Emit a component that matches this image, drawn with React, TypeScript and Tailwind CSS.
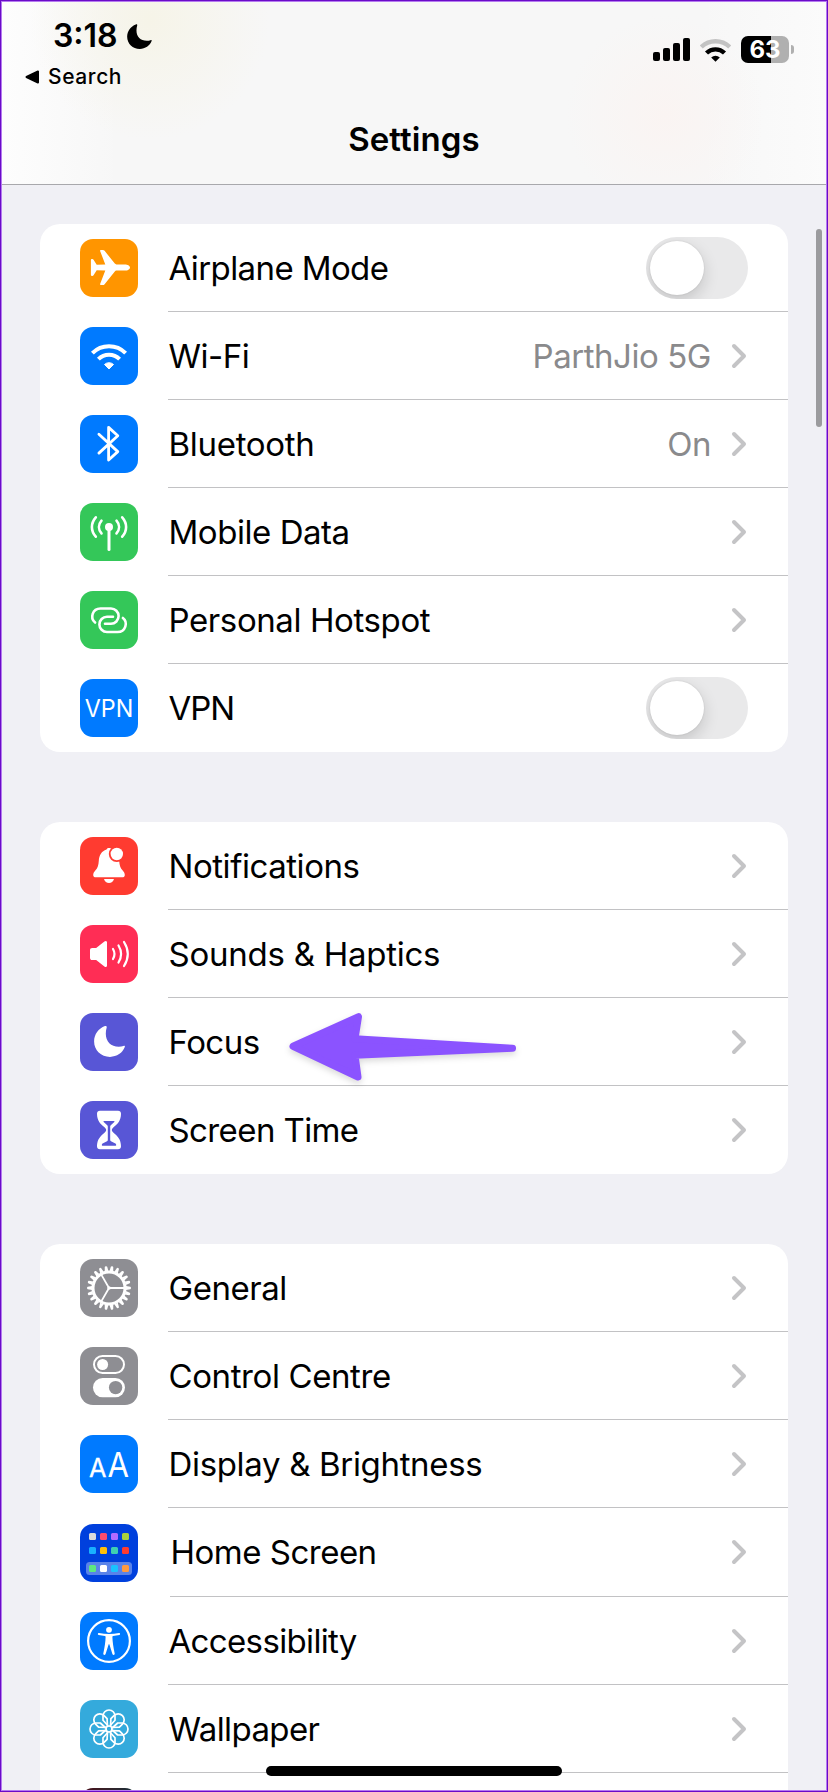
import type { ReactNode } from 'react';

type SettingsItem = {
    label: string;
    icon: ReactNode;
    iconClass: string;
    labelClass?: string;
    rowClass?: string;
    bodyClass?: string;
    value?: string;
    toggle?: boolean;
};

const GEAR_TEETH = Array.from({ length: 22 }, (_, i) => (i * 360) / 22);
const PETALS = [0, 45, 90, 135, 180, 225, 270, 315];

const HOME_APPS = [
    { y: 9, colors: ['#d9dadb', '#fc4c6c', '#b36bff', '#a9d23c'] },
    { y: 23, colors: ['#19b0ff', '#ffbf0a', '#3fcfb0', '#ff3b30'] },
    { y: 41, colors: ['#5ee87f', '#ffffff', '#19c2ff', '#ff9a40'] },
];

function Svg({ children }: { children: ReactNode }) {
    return (
        <svg viewBox="0 0 58 58" className="block size-[58px]" fill="none">
            {children}
        </svg>
    );
}

function AirplaneIcon() {
    return (
        <Svg>
            <path
                fill="#fff"
                d="M50 28.5c0-2-2.6-3.1-5-3.1h-8.6c-.7 0-1.1-.3-1.6-.8L24.6 11.8c-.5-.6-1-.9-1.8-.9h-2c-.6 0-.9.5-.7 1.1l5.2 13.4-8.6.4-3-4.9c-.4-.6-.8-.8-1.5-.8h-.5c-.5 0-.8.3-.8.8v15.2c0 .5.3.8.8.8h.5c.7 0 1.1-.2 1.5-.8l3-4.9 8.6.4L20.1 45c-.2.6.1 1.1.7 1.1h2c.8 0 1.3-.3 1.8-.9l10.200-12.800c.5-.5.9-.8 1.600-.8H45c2.400 0 5-1.100 5-3.100Z"
            />
        </Svg>
    );
}

function WifiIcon() {
    return (
        <Svg>
            <g stroke="#fff" strokeWidth="4">
                <path d="M12.4 26.1a23.5 23.5 0 0 1 33.2 0" />
                <path d="M18.4 32.2a15 15 0 0 1 21.2 0" />
            </g>
            <path fill="#fff" stroke="#fff" strokeLinejoin="round" d="M24.5 37.5a6.6 6.6 0 0 1 9 0L29 42Z" />
        </Svg>
    );
}

function BluetoothIcon() {
    return (
        <Svg>
            <path
                stroke="#fff"
                strokeWidth="2.8"
                strokeLinecap="round"
                strokeLinejoin="round"
                d="M18.9 19.3 37.8 36.6 28.6 45V12.4L37.8 20.8 18.9 38.1"
            />
        </Svg>
    );
}

function AntennaIcon() {
    return (
        <Svg>
            <circle cx="29" cy="24" r="4" fill="#fff" />
            <g stroke="#fff" strokeLinecap="round" strokeWidth="2.6">
                <path strokeWidth="3" d="M29 25v21.5" />
                <path d="M21.5 17.7c-3.4 3.9-3.4 8.8 0 12.7M36.5 17.7c3.4 3.9 3.4 8.8 0 12.7" />
                <path d="M15.8 14.3c-5.2 5.9-5.2 13.5 0 19.4M42.2 14.3c5.2 5.9 5.2 13.5 0 19.4" />
            </g>
        </Svg>
    );
}

function HotspotIcon() {
    return (
        <Svg>
            <g stroke="#fff" strokeWidth="2.6" strokeLinecap="round">
                <path d="M15.1 31.5C9.7 27.3 12.3 17.5 20.5 17.5H31a7.6 7.6 0 0 1 0 15.2H25" />
                <path d="M42.9 27C48.3 31.2 45.7 41 37.5 41H27a7.6 7.6 0 0 1 0-15.2h6" />
            </g>
        </Svg>
    );
}

function VpnIcon() {
    return (
        <Svg>
            <text x="4.8" y="38" fill="#fff" fontSize="24" textLength="48.5" lengthAdjust="spacingAndGlyphs">
                VPN
            </text>
        </Svg>
    );
}

function BellIcon() {
    return (
        <Svg>
            <path
                fill="#fff"
                d="M29 11c-1 0-1.9.4-2.5 1.4-5 1.6-7.3 5.7-7.7 11.3-.3 4.2-1 7.1-3.3 9.6-1.4 1.5-2.300 3-2.300 4.600 0 1.500 1 2.400 2.700 2.400h26.200c1.700 0 2.700-.9 2.700-2.400 0-1.600-.9-3.100-2.300-4.600-2.300-2.500-3-5.400-3.300-9.600V11Z"
            />
            <path fill="#fff" d="M24 42h10c-.8 2.6-2.6 4-5 4s-4.2-1.4-5-4Z" />
            <circle cx="36.8" cy="17" r="8" fill="#ff3b30" />
            <path fill="#ff3b30" d="M32 9.500H46v6H31Z" />
            <circle cx="36.8" cy="17" r="6.2" fill="#fff" />
        </Svg>
    );
}

function SpeakerIcon() {
    return (
        <Svg>
            <path
                fill="#fff"
                d="M10 25.2c0-1.5.8-2.3 2.3-2.3h3.2c.5 0 .9-.1 1.3-.5l7.6-5.9c1.3-1 2.6-.5 2.6 1v23c0 1.5-1.3 2-2.6 1l-7.6-5.900c-.4-.4-.8-.5-1.300-.5h-3.200c-1.500 0-2.300-.8-2.300-2.300Z"
            />
            <g stroke="#fff" strokeWidth="2.2" strokeLinecap="round">
                <path d="M33 24c1.9 3.2 1.9 6.8 0 10" />
                <path d="M38.500 20.500c3.300 5.400 3.300 11.600 0 17" />
                <path d="M44 17c4.800 7.600 4.800 16.400 0 24" />
            </g>
        </Svg>
    );
}

function MoonShape() {
    return (
        <path d="M25 13.1C18.5 15.5 14.1 21.4 14.1 28.6c0 8.7 7 15.3 15.9 15.3 6.8 0 12.6-4 14.8-9.8.4-1-.3-1.6-1.3-1.2-1.4.5-3 .8-4.7.8-7.9 0-13-5-13-12.9 0-2.2.3-4.4.9-6.3.3-1.1-.6-1.8-1.7-1.4Z" />
    );
}

function MoonIcon() {
    return (
        <Svg>
            <g fill="#fff">
                <MoonShape />
            </g>
        </Svg>
    );
}

function HourglassIcon() {
    return (
        <Svg>
            <path
                fill="#fff"
                d="M17 12.7c0-1.9 1.1-3 3-3h18c1.9 0 3 1.1 3 3 0 7-3.5 10.2-7.5 13.6-2.3 2-2.3 3.4 0 5.4C37.5 35.1 41 38.3 41 45.3c0 1.9-1.1 3-3 3H20c-1.9 0-3-1.1-3-3 0-7 3.5-10.2 7.5-13.6 2.3-2 2.3-3.4 0-5.4C20.5 22.900 17 19.700 17 12.700Z"
            />
            <path
                fill="#5856d6"
                d="M24 20h10c.5 0 .6.5.3.9L31 24c-.5.5-.8 1-.8 1.600v13.400c0 .6.3 1 .8 1.300l4.400 2.300c.5.300.8.700.8 1.500 0 .4-.2.600-.6.600H22.400c-.4 0-.6-.2-.6-.6 0-.8.3-1.200.8-1.500l4.400-2.300c.5-.3.8-.7.8-1.300V25.600c0-.6-.3-1.100-.8-1.600l-3.300-3.100c-.3-.4-.2-.9.3-.9Z"
            />
        </Svg>
    );
}

function GearIcon() {
    return (
        <Svg>
            {GEAR_TEETH.map((angle) => (
                <path
                    key={angle}
                    fill="#fff"
                    d="M46 27.1 50.300 27.800q.7.200.7 1.200t-.7 1.200L46 30.900Z"
                    transform={`rotate(${angle} 29 29)`}
                />
            ))}
            <circle cx="29" cy="29" r="16" stroke="#fff" strokeWidth="3" />
            <path stroke="#fff" strokeWidth="1.8" d="M29 29h16M29 29l-8-13.900M29 29l-8 13.900" />
            <circle cx="29" cy="29" r="1.8" fill="#fff" />
        </Svg>
    );
}

function ControlIcon() {
    return (
        <Svg>
            <rect x="14" y="9" width="30" height="17" rx="8.5" stroke="#fff" strokeWidth="2" />
            <circle cx="22.6" cy="17.5" r="5.5" fill="#fff" />
            <rect x="13" y="31" width="32" height="19.2" rx="9.6" fill="#fff" />
            <circle cx="35.6" cy="40.6" r="6.7" fill="#8e8e93" />
        </Svg>
    );
}

function TextSizeIcon() {
    return (
        <Svg>
            <g fill="#fff">
                <text x="9" y="41.5" fontSize="26" textLength="17.5" lengthAdjust="spacingAndGlyphs" stroke="#fff" strokeWidth=".3">
                    A
                </text>
                <text x="27.5" y="41.5" fontSize="34" textLength="21.5" lengthAdjust="spacingAndGlyphs">
                    A
                </text>
            </g>
        </Svg>
    );
}

function HomeScreenIcon() {
    return (
        <Svg>
            <rect x="6" y="38" width="46" height="13" rx="3.5" fill="#5a83e9" />
            {HOME_APPS.map((row) =>
                row.colors.map((color, i) => (
                    <rect key={color} x={9 + i * 11} y={row.y} width="7" height="7" rx="1.5" fill={color} />
                ))
            )}
        </Svg>
    );
}

function AccessibilityIcon() {
    return (
        <Svg>
            <circle cx="29" cy="29" r="20.9" stroke="#fff" strokeWidth="2.2" />
            <circle cx="29" cy="17.8" r="2.9" fill="#fff" />
            <path
                fill="#fff"
                d="M18.900 21.100c3.400.6 6.700.9 10.100.9s6.700-.3 10.100-.9c1.200-.2 1.500 1.700.3 2-2.200.5-4.300.8-6.300 1-.5.100-.7.400-.7.900.100 4.500 1 10.500 2.300 16.500.3 1.600-1.800 2-2.300.5L29.400 32.500c-.1-.4-.7-.4-.8 0L25.600 42c-.5 1.500-2.600 1.100-2.300-.5 1.300-6 2.200-12 2.300-16.500 0-.5-.2-.8-.7-.9-2-.2-4.100-.5-6.300-1-1.200-.3-.9-2.200.3-2Z"
            />
        </Svg>
    );
}

function FlowerIcon() {
    return (
        <Svg>
            <g stroke="#fff" strokeWidth="1.7" strokeLinejoin="round">
                {PETALS.map((angle) => (
                    <path
                        key={angle}
                        d="M28 25.800 23 20.300V16a6 6 0 0 1 12 0v4.300L30 25.800"
                        transform={`rotate(${angle} 29 29)`}
                    />
                ))}
                <circle cx="29" cy="29" r="3" />
            </g>
        </Svg>
    );
}

const connectivity: SettingsItem[] = [
    { label: 'Airplane Mode', icon: <AirplaneIcon />, iconClass: 'bg-[#ff9500]', labelClass: 'tracking-[-0.6px]', toggle: true },
    { label: 'Wi-Fi', icon: <WifiIcon />, iconClass: 'bg-[#007aff]', labelClass: 'tracking-[-0.5px]', value: 'ParthJio 5G' },
    { label: 'Bluetooth', icon: <BluetoothIcon />, iconClass: 'bg-[#007aff]', labelClass: 'tracking-[-0.3px]', value: 'On' },
    { label: 'Mobile Data', icon: <AntennaIcon />, iconClass: 'bg-[#34c759]', labelClass: 'tracking-[-0.45px]' },
    { label: 'Personal Hotspot', icon: <HotspotIcon />, iconClass: 'bg-[#34c759]', labelClass: 'tracking-[-0.4px]' },
    { label: 'VPN', icon: <VpnIcon />, iconClass: 'bg-[#007aff]', labelClass: 'tracking-[-1px]', toggle: true },
];

const alerts: SettingsItem[] = [
    { label: 'Notifications', icon: <BellIcon />, iconClass: 'bg-[#ff3b30]', labelClass: 'tracking-[-0.45px]' },
    { label: 'Sounds & Haptics', icon: <SpeakerIcon />, iconClass: 'bg-[#ff2d55]', labelClass: 'tracking-[-0.25px]' },
    { label: 'Focus', icon: <MoonIcon />, iconClass: 'bg-[#5856d6]', labelClass: 'tracking-[-0.55px]' },
    { label: 'Screen Time', icon: <HourglassIcon />, iconClass: 'bg-[#5856d6]', labelClass: 'tracking-[-0.6px]' },
];

const system: SettingsItem[] = [
    { label: 'General', icon: <GearIcon />, iconClass: 'bg-[#8e8e93]', labelClass: 'tracking-[-0.45px]' },
    { label: 'Control Centre', icon: <ControlIcon />, iconClass: 'bg-[#8e8e93]', labelClass: 'tracking-[-0.4px]' },
    { label: 'Display & Brightness', icon: <TextSizeIcon />, iconClass: 'bg-[#007aff]', labelClass: 'tracking-[-0.33px]' },
    {
        label: 'Home Screen',
        icon: <HomeScreenIcon />,
        iconClass: 'bg-[#0040dd]',
        labelClass: 'tracking-[-0.5px]',
        rowClass: 'h-[89px] pt-px',
        bodyClass: 'ml-8 pb-[2px]',
    },
    { label: 'Accessibility', icon: <AccessibilityIcon />, iconClass: 'bg-[#007aff]', labelClass: 'tracking-[-0.65px]' },
    { label: 'Wallpaper', icon: <FlowerIcon />, iconClass: 'bg-[#34aadc]', labelClass: 'tracking-[-0.6px]' },
    { label: '', icon: null, iconClass: 'bg-linear-to-r from-[#4a0618] to-[#06303a]' },
];

function Toggle() {
    return (
        <div className="flex h-[62px] w-[102px] shrink-0 items-center overflow-hidden rounded-full bg-[#e9e9ea] px-1">
            <div className="size-[54px] rounded-full bg-white shadow-[0_6px_16px_rgba(0,0,0,0.16),0_0_2px_rgba(0,0,0,0.12)]" />
        </div>
    );
}

function Chevron() {
    return (
        <svg viewBox="0 0 16 26" className="mr-px h-[26px] w-4 shrink-0" fill="none">
            <path d="M3 3l10 10L3 23" stroke="#c4c4c6" strokeWidth="4" strokeLinecap="round" strokeLinejoin="round" />
        </svg>
    );
}

function SettingsRow({ item, last }: { item: SettingsItem; last: boolean }) {
    return (
        <div className={`flex items-center pl-10 ${item.rowClass ?? 'h-[88px]'}`}>
            <div className={`size-[58px] shrink-0 overflow-hidden rounded-[13px] ${item.iconClass}`}>{item.icon}</div>
            <div
                className={`flex h-full flex-1 items-center justify-between pr-10 pl-[0.5px] ${item.bodyClass ?? 'ml-[30px]'} ${
                    last ? '' : 'shadow-[inset_0_-1px_0_#c2c2c4]'
                }`}
            >
                <span className={`text-[33px] leading-none whitespace-nowrap ${item.labelClass ?? ''}`}>{item.label}</span>
                {item.toggle && <Toggle />}
                {!item.toggle && item.label && (
                    <div className="flex items-center gap-5">
                        {item.value && (
                            <span className="text-[33px] leading-none tracking-[-0.45px] text-[#8a8a8c]">{item.value}</span>
                        )}
                        <Chevron />
                    </div>
                )}
            </div>
        </div>
    );
}

function SettingsGroup({ items }: { items: SettingsItem[] }) {
    return (
        <section className="overflow-hidden rounded-[20px] bg-white">
            {items.map((item, i) => (
                <SettingsRow key={item.label} item={item} last={i === items.length - 1} />
            ))}
        </section>
    );
}

function StatusBar() {
    return (
        <div className="flex justify-between pt-[18px] pr-[34px] pl-[25px]">
            <div>
                <div className="flex items-center gap-[9px] pl-7">
                    <span className="text-[32px] leading-[36px] font-semibold">3:18</span>
                    <svg viewBox="14 12.6 31.2 31.4" className="size-[25px]" fill="#000">
                        <MoonShape />
                    </svg>
                </div>
                <div className="mt-[11px] flex items-center gap-2">
                    <svg viewBox="0 0 15 14" className="h-[14px] w-[15px]">
                        <path d="M1.5 7 13 1.5v11Z" stroke="#000" strokeWidth="2" strokeLinejoin="round" />
                    </svg>
                    <span className="text-[21px] leading-6 font-medium tracking-[0.6px]">Search</span>
                </div>
            </div>
            <div className="mt-[18px] flex h-[27px] items-center">
                <div className="mr-[10px] flex h-[23px] items-end gap-[3px]">
                    <div className="h-[9px] w-[7px] rounded-[2px] bg-black" />
                    <div className="h-[13px] w-[7px] rounded-[2px] bg-black" />
                    <div className="h-[18px] w-[7px] rounded-[2px] bg-black" />
                    <div className="h-[23px] w-[7px] rounded-[2px] bg-black" />
                </div>
                <svg viewBox="0 0 31 24" className="mr-[10px] h-6 w-[31px]" fill="none">
                    <path d="M1.3 9a20.5 20.5 0 0 1 28.4 0" stroke="#c3c3c3" strokeWidth="4.4" />
                    <path d="M6.5 15a13 13 0 0 1 18 0" stroke="#000" strokeWidth="4.4" />
                    <path d="M11.2 19.5a6.3 6.3 0 0 1 8.6 0l-4.3 4.3Z" fill="#000" />
                </svg>
                <div className="flex h-[27px] w-12 items-center justify-center rounded-[7px] bg-linear-to-r from-black from-[62.5%] to-[#b0b0b0] to-[62.5%]">
                    <span className="text-[24px] leading-none font-bold text-white">63</span>
                </div>
                <div className="ml-[2px] h-[9px] w-[3px] rounded-r-full bg-[#b0b0b0]" />
            </div>
        </div>
    );
}

export default function App() {
    return (
        <div className="relative flex h-[1792px] w-[828px] flex-col overflow-hidden bg-[#f0f0f5] font-['Inter',sans-serif] text-black">
            <header className="h-[185px] shrink-0 border-b border-[#a8a8ac] bg-[#f7f7f7] bg-[radial-gradient(circle_at_150px_20px,#f6f4e8_0,transparent_120px),radial-gradient(circle_at_665px_115px,#faf4f2_0,transparent_100px),linear-gradient(to_right,#fdfdfd_0,transparent_120px,transparent_700px,#fbfbfb_828px)]">
                <StatusBar />
                <h1 className="mt-[30px] text-center text-[33px] leading-[40px] font-semibold tracking-[0.1px]">Settings</h1>
            </header>

            <main className="flex flex-col gap-[70px] px-10 pt-[39px]">
                <SettingsGroup items={connectivity} />
                <SettingsGroup items={alerts} />
                <SettingsGroup items={system} />
            </main>

            {/* Arrow pointing at the Focus row */}
            <svg
                viewBox="0 0 240 80"
                className="absolute top-[1007px] left-[284px] h-20 w-60 drop-shadow-[0_3px_3px_rgba(0,0,0,0.15)]"
            >
                <path
                    d="M9 39.3 74.5 9.7 71 31.8 228.5 41.3 71 48.2 74 70Z"
                    fill="#8b53ff"
                    stroke="#8b53ff"
                    strokeWidth="7"
                    strokeLinejoin="round"
                />
            </svg>

            {/* Scroll indicator */}
            <div className="absolute top-[229px] left-[816px] h-[198px] w-[6px] rounded-full bg-[#9b9b9e]" />
            {/* Home indicator */}
            <div className="absolute top-[1766px] left-[266px] h-[10px] w-[296px] rounded-full bg-black" />
            {/* Frame */}
            <div className="pointer-events-none absolute inset-0 border border-[#6a0bc8] shadow-[inset_0_0_0_1px_#b57af0]" />
        </div>
    );
}
